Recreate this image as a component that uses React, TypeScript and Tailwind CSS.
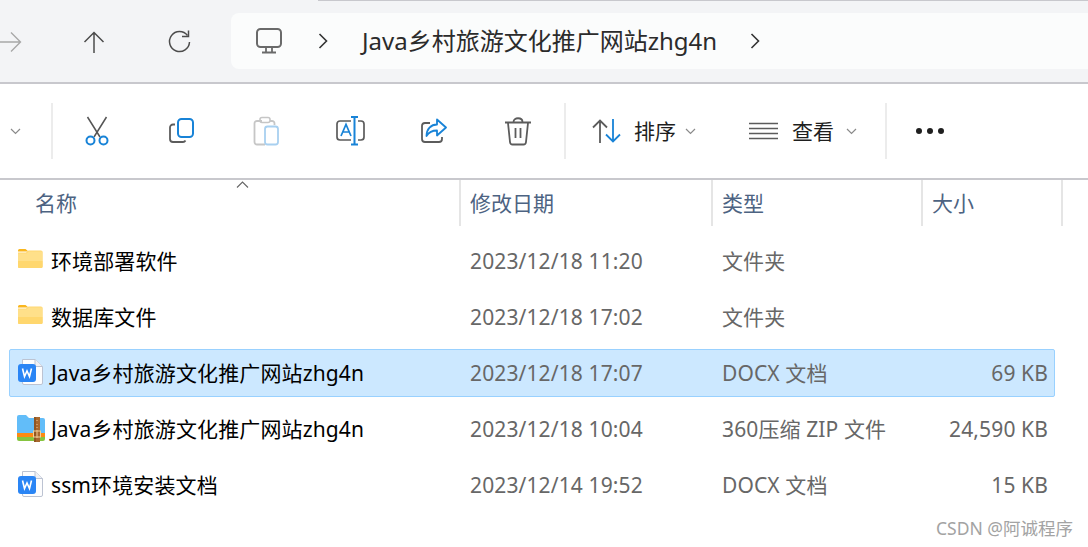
const font = "font-['Noto_Sans','Noto_Sans_CJK_SC',sans-serif]";

const Folder = () => (
  <svg width="26" height="22" viewBox="0 0 26 22" className="-ml-px -mt-[6px] shrink-0">
    <path d="M1 3.500A1.500 1.500 0 0 1 2.500 2h6l3 2.500H1z" fill="#f9b61e" />
    <path d="M1 5.500 9 5.500 11.500 3.500H24A1.500 1.500 0 0 1 25.500 5V19.500A1.500 1.500 0 0 1 24 21H2.500A1.500 1.500 0 0 1 1 19.500z" fill="#ffd873" />
    <path d="M1 6.500 9.500 6.500 12 4.500H25.500V19.500A1.500 1.500 0 0 1 24 21H2.500A1.500 1.500 0 0 1 1 19.500z" fill="#ffe08a" />
    <path d="M1 14H25.500V19.500A1.500 1.500 0 0 1 24 21H2.500A1.500 1.500 0 0 1 1 19.500z" fill="#ffd362" opacity="0.7" />
  </svg>
);

const Word = () => (
  <svg width="26" height="28" viewBox="0 0 26 28" className="-mt-0.5 shrink-0">
    <path d="M4.500 1.500H17L24.500 8.500V25A1.500 1.500 0 0 1 23 26.500H6A1.500 1.500 0 0 1 4.500 25z" fill="#fdfdfe" stroke="#bcc3d2" strokeWidth="1" />
    <path d="M17 1.500V8.500H24.500" fill="#eef0f5" stroke="#bcc3d2" strokeWidth="1" />
    <rect x="0" y="6" width="18" height="18" rx="3" fill="#2a85f5" />
    <path d="M4.500 10.500 6.500 18.500 9 13 11.500 18.500 13.500 10.500" fill="none" stroke="#fff" strokeWidth="1.600" />
  </svg>
);

const Zip = () => (
  <svg width="28" height="28" viewBox="0 0 28 28" className="-mt-0.5 shrink-0">
    <path d="M0 3A2 2 0 0 1 2 1H9L12 4H26A2 2 0 0 1 28 6V20H0z" fill="#62bdf9" />
    <path d="M0 19H28V23H0z" fill="#fb8a12" />
    <path d="M0 23H28V25A2 2 0 0 1 26 27H2A2 2 0 0 1 0 25z" fill="#86c440" />
    <rect x="17" y="3" width="6" height="25" fill="#a8682e" />
    <rect x="17" y="3" width="2" height="25" fill="#8f5623" />
    <rect x="16.500" y="17" width="7" height="6" fill="none" stroke="#f2d19a" strokeWidth="1" />
    <path d="M20 16v8M20 6v1M20 10v1M20 13v1" stroke="#eec58d" strokeWidth="1" />
  </svg>
);

const ToolSep = ({ ml }: { ml: string }) => <div className={`h-14 w-0.5 bg-[#ececec] ${ml}`} />;

const SmallChevron = () => (
  <svg width="11" height="7" viewBox="0 0 11 7" className="shrink-0">
    <path d="M1 1 5.500 5.500 10 1" fill="none" stroke="#8a8a8a" strokeWidth="1.200" />
  </svg>
);

const rows = [
  { icon: <Folder />, name: '环境部署软件', date: '2023/12/18 11:20', type: '文件夹', size: '' },
  { icon: <Folder />, name: '数据库文件', date: '2023/12/18 17:02', type: '文件夹', size: '' },
  { icon: <Word />, name: 'Java乡村旅游文化推广网站zhg4n', date: '2023/12/18 17:07', type: 'DOCX 文档', size: '69 KB', selected: true },
  { icon: <Zip />, name: 'Java乡村旅游文化推广网站zhg4n', date: '2023/12/18 10:04', type: '360压缩 ZIP 文件', size: '24,590 KB' },
  { icon: <Word />, name: 'ssm环境安装文档', date: '2023/12/14 19:52', type: 'DOCX 文档', size: '15 KB' },
];

export default function App() {
  return (
    <div className={`relative h-[547px] w-[1088px] overflow-hidden bg-white ${font}`}>
      {/* address bar */}
      <div className="flex h-[84px] items-center border-b-2 border-[#c8c8cd] bg-[#f3f4f6]">
        <svg width="22" height="22" viewBox="0 0 22 22" className="mt-0.5 shrink-0">
          <path d="M0 11H20.500M11 1.500 20.500 11 11 20.500" fill="none" stroke="#a8a8a8" strokeWidth="1.400" />
        </svg>
        <svg width="22" height="22" viewBox="0 0 22 22" className="ml-[61px] mt-0.5 shrink-0">
          <path d="M11 22V1.500M1.500 11 11 1.500 20.500 11" fill="none" stroke="#4c4c4c" strokeWidth="1.500" />
        </svg>
        <svg width="24" height="24" viewBox="0 0 24 24" className="ml-[62px] mt-0.5 shrink-0">
          <path d="M20.500 5.500A10 10 0 1 0 22.500 12" fill="none" stroke="#4c4c4c" strokeWidth="1.500" />
          <path d="M21.500 0.500V6.500H15" fill="none" stroke="#4c4c4c" strokeWidth="1.500" />
        </svg>
        <div className="ml-[40px] flex h-14 flex-1 items-center rounded-l-lg bg-[#fbfcfc]">
          <svg width="28" height="28" viewBox="0 0 28 28" className="ml-6 shrink-0">
            <rect x="2" y="2" width="24" height="18" rx="3.500" fill="none" stroke="#6a6a6a" strokeWidth="2" />
            <path d="M11 20v5M17 20v5M7 25.500H21" fill="none" stroke="#6a6a6a" strokeWidth="1.800" />
          </svg>
          <svg width="10" height="16" viewBox="0 0 10 16" className="ml-[35px] shrink-0">
            <path d="M1.500 1 8.500 8 1.500 15" fill="none" stroke="#333" strokeWidth="1.600" />
          </svg>
          <span className="ml-[34px] text-[24px] whitespace-nowrap text-[#2b2b2b]">Java乡村旅游文化推广网站zhg4n</span>
          <svg width="10" height="16" viewBox="0 0 10 16" className="ml-[33px] shrink-0">
            <path d="M1.500 1 8.500 8 1.500 15" fill="none" stroke="#333" strokeWidth="1.600" />
          </svg>
        </div>
      </div>

      {/* command bar */}
      <div className="flex h-24 items-center border-b-2 border-[#c8c8cd] bg-white">
        <div className="ml-[10px]"><SmallChevron /></div>
        <ToolSep ml="ml-[30px]" />
        <svg width="26" height="30" viewBox="0 0 26 30" className="ml-[31px] shrink-0">
          <path d="M3.500 1 16 21M22.500 1 10 21" fill="none" stroke="#555" strokeWidth="1.500" />
          <circle cx="6.500" cy="24.500" r="4" fill="none" stroke="#1883d7" strokeWidth="2" />
          <circle cx="19.500" cy="24.500" r="4" fill="none" stroke="#1883d7" strokeWidth="2" />
        </svg>
        <svg width="26" height="26" viewBox="0 0 26 26" className="ml-[59px] shrink-0">
          <path d="M6 6.500H4A3 3 0 0 0 1 9.500V21A3 3 0 0 0 4 24H14A3 3 0 0 0 16.500 22.500" fill="none" stroke="#5c5c5c" strokeWidth="1.800" />
          <rect x="9" y="1" width="15" height="18" rx="3.500" fill="none" stroke="#1883d7" strokeWidth="2" />
        </svg>
        <svg width="26" height="30" viewBox="0 0 26 30" className="ml-[58px] shrink-0">
          <path d="M9 5H4A2.500 2.500 0 0 0 1.500 7.500V26A2.500 2.500 0 0 0 4 28.500H12M17 5H19A2.500 2.500 0 0 1 21.500 7.500V9" fill="none" stroke="#c6c6c6" strokeWidth="1.800" />
          <rect x="7" y="1.500" width="10" height="5" rx="2" fill="none" stroke="#c6c6c6" strokeWidth="1.600" />
          <rect x="12" y="10.500" width="13" height="18" rx="2.500" fill="none" stroke="#a8d0f0" strokeWidth="1.800" />
        </svg>
        <svg width="30" height="30" viewBox="0 0 30 30" className="ml-[57px] shrink-0">
          <path d="M15 5H4A3 3 0 0 0 1 8V21A3 3 0 0 0 4 24H15M22 5H25A3 3 0 0 1 28 8V21A3 3 0 0 1 25 24H22" fill="none" stroke="#5c5c5c" strokeWidth="1.700" />
          <path d="M5 20 10 8.500 15 20M6.800 16H13.200" fill="none" stroke="#1883d7" strokeWidth="1.700" />
          <path d="M15 1H22M15 28.500H22M18.500 1V28.500" fill="none" stroke="#1883d7" strokeWidth="2" />
        </svg>
        <svg width="26" height="26" viewBox="0 0 26 26" className="ml-[55px] shrink-0">
          <path d="M9 5H4A3 3 0 0 0 1 8V21A3 3 0 0 0 4 24H18A3 3 0 0 0 21 21V19" fill="none" stroke="#5c5c5c" strokeWidth="1.800" />
          <path d="M16 1.500 25 9.500 16 17.500V12.500C11 12.500 8 14 5.500 18 5.500 11 10 6.500 16 6.500z" fill="none" stroke="#1883d7" strokeWidth="1.800" strokeLinejoin="round" />
        </svg>
        <svg width="28" height="30" viewBox="0 0 28 30" className="ml-[57px] shrink-0">
          <path d="M1 6.500H27M9.500 6C9.500 1 18.500 1 18.500 6M4 7 6 26A2.500 2.500 0 0 0 8.500 28.500H19.500A2.500 2.500 0 0 0 22 26L24 7M11.500 12V22M16.500 12V22" fill="none" stroke="#5c5c5c" strokeWidth="1.800" />
        </svg>
        <ToolSep ml="ml-[32px]" />
        <svg width="29" height="24" viewBox="0 0 29 24" className="ml-[26px] shrink-0">
          <path d="M8 24V1.500M1 8.500 8 1.500 15 8.500" fill="none" stroke="#5c5c5c" strokeWidth="1.800" />
          <path d="M21 0V22.500M14 15.500 21 22.500 28 15.500" fill="none" stroke="#1883d7" strokeWidth="1.800" />
        </svg>
        <span className="ml-[13px] text-[21px] leading-none text-[#1f1f1f]">排序</span>
        <div className="ml-[9px]"><SmallChevron /></div>
        <svg width="29" height="18" viewBox="0 0 29 18" className="ml-[53px] shrink-0">
          <path d="M0 1.500H29M0 6.500H29M0 11.500H29M0 16.500H29" fill="none" stroke="#5c5c5c" strokeWidth="1.500" />
        </svg>
        <span className="ml-[14px] text-[21px] leading-none text-[#1f1f1f]">查看</span>
        <div className="ml-[12px]"><SmallChevron /></div>
        <ToolSep ml="ml-[28px]" />
        <div className="ml-[29px] flex gap-[5px]">
          <div className="size-[6px] rounded-full bg-[#1f1f1f]" />
          <div className="size-[6px] rounded-full bg-[#1f1f1f]" />
          <div className="size-[6px] rounded-full bg-[#1f1f1f]" />
        </div>
      </div>

      {/* column headers */}
      <div className="relative grid h-[46px] grid-cols-[459px_252px_210px_142px] text-[21px] text-[#4d6382]">
        <div className="flex items-center pl-[35px] pt-px">名称</div>
        <div className="flex items-center border-l-2 border-[#e5e5e5] pl-[9px] pt-px">修改日期</div>
        <div className="flex items-center border-l-2 border-[#e5e5e5] pl-[9px] pt-px">类型</div>
        <div className="flex items-center border-x-2 border-[#e5e5e5] pl-[9px] pt-px">大小</div>
        <svg width="13" height="7" viewBox="0 0 13 7" className="absolute left-[236px] top-[1px]">
          <path d="M1 6.500 6.500 1 12 6.500" fill="none" stroke="#666" strokeWidth="1.100" />
        </svg>
      </div>

      {/* file rows */}
      <div className="flex flex-col gap-2 px-[9px] pt-[11px]">
        {rows.map((row) => (
          <div
            key={row.date}
            className={`grid h-12 w-[1046px] grid-cols-[450px_252px_210px_126px] items-center rounded-[2px] border text-[21px] tracking-[0.12px] ${
              row.selected ? 'border-[#99d1ff] bg-[#cce8ff]' : 'border-transparent'
            }`}
          >
            <div className="flex items-center">
              <div className="flex w-[41px] justify-center">{row.icon}</div>
              <span className="pt-0.5 whitespace-nowrap text-black">{row.name}</span>
            </div>
            <span className="pl-[10px] pt-0.5 whitespace-nowrap text-[#676767]">{row.date}</span>
            <span className="pl-[10px] pt-0.5 whitespace-nowrap text-[#676767]">{row.type}</span>
            <span className="pt-0.5 text-right whitespace-nowrap text-[#676767]">{row.size}</span>
          </div>
        ))}
      </div>

      <div className="absolute right-[15px] top-[516px] text-[17.500px] leading-6 text-[#a3a3a3]">CSDN @阿诚程序</div>
      <div className="absolute left-[318px] right-0 top-0 h-px bg-[#c8c8cd]" />
    </div>
  );
}
